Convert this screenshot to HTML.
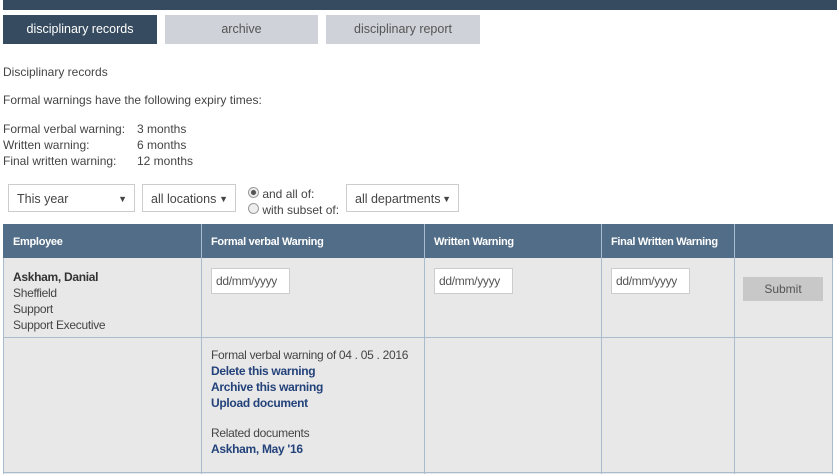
<!DOCTYPE html>
<html><head><style>
body{margin:0;width:837px;height:474px;overflow:hidden;background:#fff;font-family:"Liberation Sans",sans-serif;font-size:12px;color:#444;position:relative}
.a{position:absolute}
.tab{position:absolute;top:15px;height:29px;line-height:29px;text-align:center;font-size:12.5px;background:#cfd2d8;color:#555}
.sel{position:absolute;top:184px;height:28px;border:1px solid #ccc;background:#fff;line-height:28px;font-size:12.5px;color:#444;box-sizing:border-box;padding-left:8px}
.sel span{position:absolute;right:7px;font-size:9px}
.c{position:absolute;box-sizing:border-box}
.in{position:absolute;width:79px;height:26px;background:#fff;border:1px solid #ccc;box-sizing:border-box;line-height:24px;padding-left:4px;font-size:12px;color:#555;letter-spacing:-0.3px}
b{color:#333}
.lk{color:#23427a;font-weight:bold;letter-spacing:-0.3px}
.hd{position:absolute;top:236px;color:#fff;font-weight:bold;font-size:11px;letter-spacing:-0.3px}
.t{letter-spacing:-0.3px}
</style></head><body>
<div class="a" style="left:3px;top:0;width:834px;height:10px;background:#364b5f"></div>
<div class="tab" style="left:3px;width:154px;background:#364b5f;color:#fff">disciplinary records</div>
<div class="tab" style="left:165px;width:153px">archive</div>
<div class="tab" style="left:326px;width:154px">disciplinary report</div>
<div class="a" style="left:3px;top:65px">Disciplinary records</div>
<div class="a" style="left:3px;top:93px">Formal warnings have the following expiry times:</div>
<div class="a" style="left:3px;top:121px;line-height:16px">Formal verbal warning:<br>Written warning:<br>Final written warning:</div>
<div class="a" style="left:137px;top:121px;line-height:16px">3 months<br>6 months<br>12 months</div>
<div class="sel" style="left:8px;width:127px">This year<span>▼</span></div>
<div class="sel" style="left:142px;width:94px">all locations<span>▼</span></div>
<div class="a" style="left:248px;top:186px;line-height:16px"><span style="display:inline-block;width:9px;height:9px;border-radius:50%;border:1px solid #999;background:radial-gradient(#555 35%,#eee 45%)"></span> and all of:<br><span style="display:inline-block;width:9px;height:9px;border-radius:50%;border:1px solid #999;background:#eee"></span> with subset of:</div>
<div class="sel" style="left:346px;width:113px">all departments<span>▼</span></div>
<div class="c" style="left:3px;top:224px;width:830px;height:34px;background:#526d87"></div>
<div class="c" style="left:3px;top:258px;width:830px;height:216px;background:#e8e8e8;border-left:1px solid #a9bccd;border-right:1px solid #a9bccd"></div>
<div class="c" style="left:3px;top:337px;width:830px;height:1px;background:#a9bccd"></div>
<div class="c" style="left:3px;top:472px;width:830px;height:1px;background:#a9bccd"></div>
<div class="c" style="left:201px;top:224px;width:1px;height:250px;background:#a9bccd"></div>
<div class="c" style="left:424px;top:224px;width:1px;height:250px;background:#a9bccd"></div>
<div class="c" style="left:601px;top:224px;width:1px;height:250px;background:#a9bccd"></div>
<div class="c" style="left:734px;top:224px;width:1px;height:250px;background:#a9bccd"></div>
<div class="hd" style="left:13px">Employee</div>
<div class="hd" style="left:211px">Formal verbal Warning</div>
<div class="hd" style="left:434px">Written Warning</div>
<div class="hd" style="left:611px">Final Written Warning</div>
<div class="a t" style="left:13px;top:269px;line-height:16px"><b>Askham, Danial</b><br>Sheffield<br>Support<br>Support Executive</div>
<div class="in" style="left:211px;top:268px">dd/mm/yyyy</div>
<div class="in" style="left:434px;top:268px">dd/mm/yyyy</div>
<div class="in" style="left:611px;top:268px">dd/mm/yyyy</div>
<div class="a" style="left:743px;top:277px;width:80px;height:24px;background:#c8c8c8;color:#555;text-align:center;line-height:24px">Submit</div>
<div class="a t" style="left:211px;top:347px;line-height:16px">Formal verbal warning of 04 . 05 . 2016<br><span class="lk">Delete this warning</span><br><span class="lk">Archive this warning</span><br><span class="lk">Upload document</span></div>
<div class="a t" style="left:211px;top:425px;line-height:16px">Related documents<br><span class="lk">Askham, May '16</span></div>
</body></html>
